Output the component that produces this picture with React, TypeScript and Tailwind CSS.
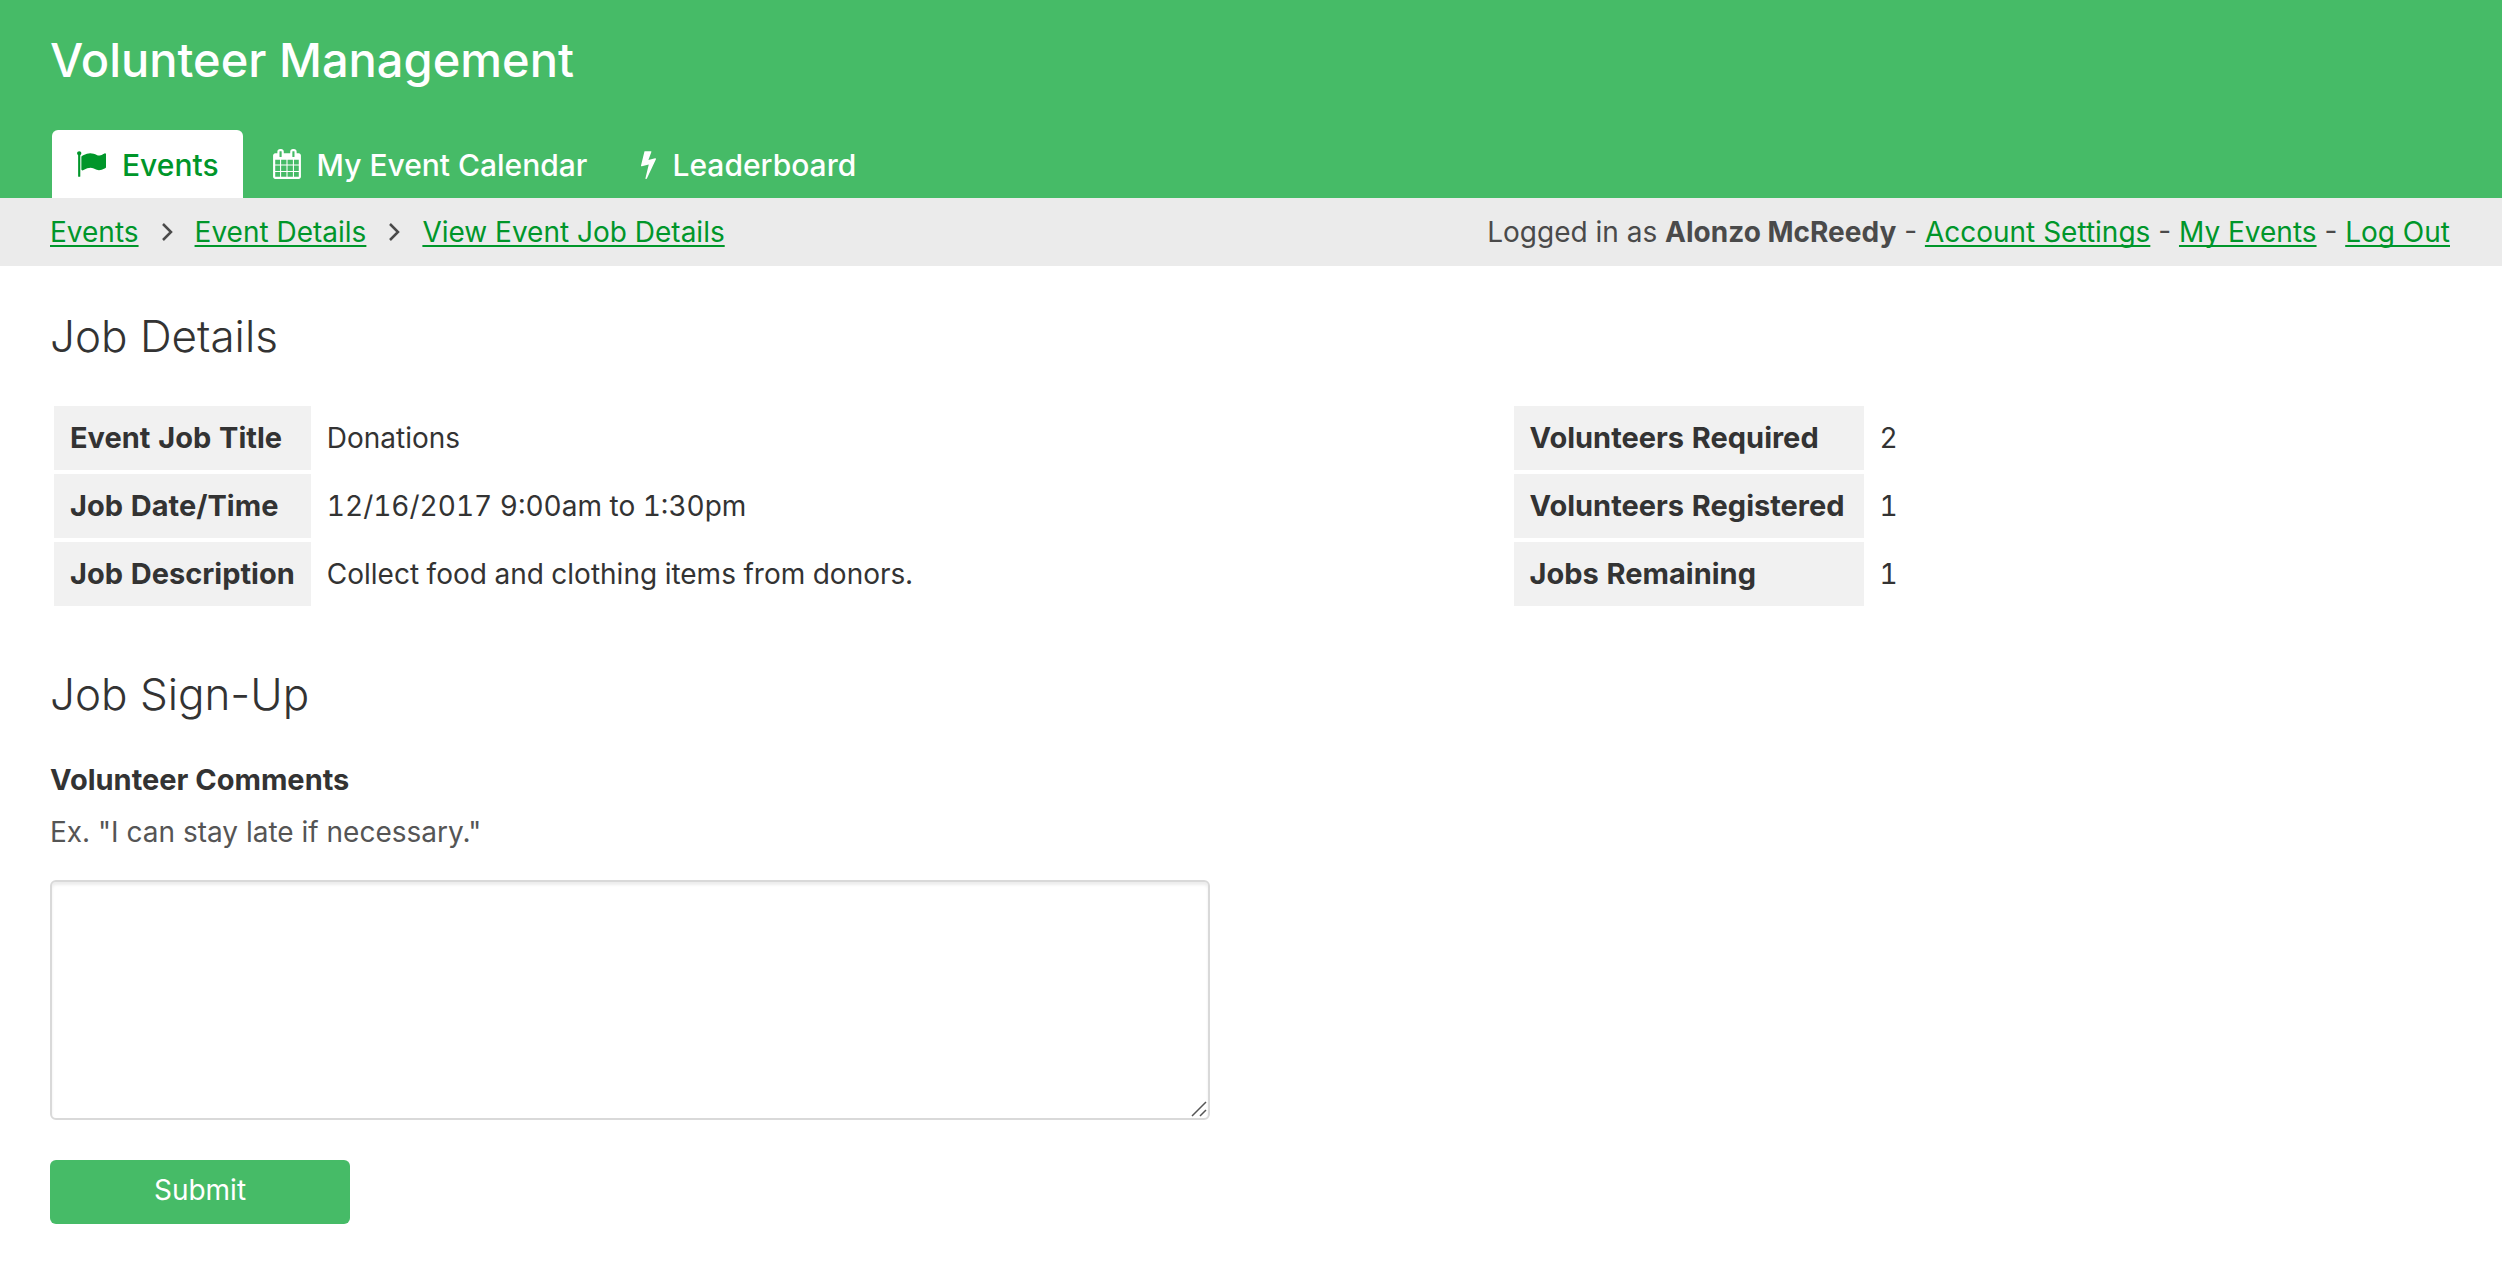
import React, { useState } from 'react';
import { clsx } from 'clsx';

interface Tab {
  id: string;
  label: string;
  path: string;
  viewBox: string;
  iconClass: string;
}

interface DetailRow {
  label: string;
  value: string;
}

const TABS: Tab[] = [
  {
    id: 'events',
    label: 'Events',
    viewBox: '0 0 1792 1792',
    iconClass: 'w-[30px] h-[30px]',
    path: 'M320 256q0 72-64 110v1266q0 13-9.5 22.5t-22.5 9.5h-64q-13 0-22.5-9.5t-9.5-22.5v-1266q-64-38-64-110 0-53 37.5-90.5t90.5-37.5 90.5 37.5 37.5 90.5zm1472 64v763q0 25-12.5 38.5t-39.5 27.5q-215 116-369 116-61 0-123.5-22t-108.5-48-115.5-48-142.5-22q-192 0-464 146-17 9-33 9-26 0-45-19t-19-45v-742q0-32 31-55 21-14 79-43 236-120 421-120 107 0 200 29t219 88q38 19 88 19 54 0 117.5-21t110-47 88-47 54.5-21q26 0 45 19t19 45z'
  },
  {
    id: 'calendar',
    label: 'My Event Calendar',
    viewBox: '64 0 1664 1792',
    iconClass: 'w-[28px] h-[30px]',
    path: 'M192 1664h288v-288h-288v288zm352 0h320v-288h-320v288zm-352-352h288v-320h-288v320zm352 0h320v-320h-320v320zm-352-384h288v-288h-288v288zm736 736h320v-288h-320v288zm-384-736h320v-288h-320v288zm768 736h288v-288h-288v288zm-384-352h320v-320h-320v320zm-352-864v-288q0-13-9.5-22.5t-22.5-9.5h-64q-13 0-22.5 9.5t-9.5 22.5v288q0 13 9.5 22.5t22.5 9.5h64q13 0 22.5-9.5t9.5-22.5zm736 864h288v-320h-288v320zm-384-384h320v-288h-320v288zm384 0h288v-288h-288v288zm32-480v-288q0-13-9.5-22.5t-22.5-9.5h-64q-13 0-22.5 9.5t-9.5 22.5v288q0 13 9.5 22.5t22.5 9.5h64q13 0 22.5-9.5t9.5-22.5zm384-64v1280q0 52-38 90t-90 38h-1408q-52 0-90-38t-38-90v-1280q0-52 38-90t90-38h128v-96q0-66 47-113t113-47h64q66 0 113 47t47 113v96h384v-96q0-66 47-113t113-47h64q66 0 113 47t47 113v96h128q52 0 90 38t38 90z'
  },
  {
    id: 'leaderboard',
    label: 'Leaderboard',
    viewBox: '448 0 896 1792',
    iconClass: 'w-[15px] h-[30px]',
    path: 'M1333 566q18 20 7 44l-540 1157q-13 25-42 25-4 0-14-2-17-5-25.5-19t-4.5-30l197-808-406 101q-4 1-12 1-18 0-31-11-18-15-13-39l201-825q4-14 16-23t28-9h328q19 0 32 12.5t13 29.5q0 8-5 18l-171 463 396-98q8-2 12-2 19 0 34 15z'
  }
];

const CRUMBS = ['Events', 'Event Details', 'View Event Job Details'];

const JOB_ROWS: DetailRow[] = [
  { label: 'Event Job Title', value: 'Donations' },
  { label: 'Job Date/Time', value: '12/16/2017 9:00am to 1:30pm' },
  { label: 'Job Description', value: 'Collect food and clothing items from donors.' }
];

const COUNT_ROWS: DetailRow[] = [
  { label: 'Volunteers Required', value: '2' },
  { label: 'Volunteers Registered', value: '1' },
  { label: 'Jobs Remaining', value: '1' }
];

function TextLink({ children }: { children: React.ReactNode }) {
  return (
    <a
      href="#"
      className="text-[#00962a] underline decoration-2 underline-offset-3 [text-decoration-skip-ink:none]"
    >
      {children}
    </a>
  );
}

function DetailTable({ rows, labelClass }: { rows: DetailRow[]; labelClass: string }) {
  return (
    <table className="border-separate border-spacing-1 text-left tabular-nums">
      <tbody>
        {rows.map(row => (
          <tr key={row.label}>
            <th
              scope="row"
              className={clsx('h-16 bg-[#f1f1f1] px-4 text-[29px] font-bold whitespace-nowrap', labelClass)}
            >
              {row.label}
            </th>
            <td className="px-3">{row.value}</td>
          </tr>
        ))}
      </tbody>
    </table>
  );
}

export default function App() {
  const [activeTab, setActiveTab] = useState('events');
  const [comments, setComments] = useState('');

  return (
    <div className="bg-white font-[Inter,sans-serif] text-[28px] leading-10 text-[#333333]">
      {/* Header with tabs */}
      <header className="bg-[#46bb67] px-[50px] pt-[30px] text-white">
        <h1 className="text-[47px] leading-[60px] font-medium">Volunteer Management</h1>
        <nav className="mt-10 flex gap-1.5 px-0.5 text-[30px] font-medium">
          {TABS.map(tab => (
            <a
              key={tab.id}
              href="#"
              onClick={() => setActiveTab(tab.id)}
              className={clsx(
                'flex h-[68px] items-center gap-4 rounded-t-md px-6',
                activeTab === tab.id && 'bg-white text-[#00962a]'
              )}
            >
              <svg viewBox={tab.viewBox} className={clsx('shrink-0 fill-current', tab.iconClass)} aria-hidden="true">
                <path d={tab.path} />
              </svg>
              <span className="pt-0.5">{tab.label}</span>
            </a>
          ))}
        </nav>
      </header>

      {/* Breadcrumb + account links */}
      <div className="flex h-[68px] items-center justify-between bg-[#ebebeb] pr-[52px] pl-[50px] text-[#4a4a4a]">
        <nav className="flex items-center">
          {CRUMBS.map((crumb, i) => (
            <React.Fragment key={crumb}>
              {i > 0 && (
                <svg viewBox="0 0 12 18" className="mx-[22px] h-[18px] w-3 fill-none stroke-current" aria-hidden="true">
                  <path d="M2 1l8 8-8 8" strokeWidth="2.5" />
                </svg>
              )}
              <TextLink>{crumb}</TextLink>
            </React.Fragment>
          ))}
        </nav>
        <p>
          Logged in as <strong className="font-bold">Alonzo McReedy</strong> - <TextLink>Account Settings</TextLink>
          {' - '}
          <TextLink>My Events</TextLink> - <TextLink>Log Out</TextLink>
        </p>
      </div>

      <main className="pt-10 pb-12">
        <section>
          <h2 className="px-[50px] text-[44px] leading-[60px] font-light">Job Details</h2>
          <div className="mt-9 flex">
            <div className="w-7/12 px-[50px]">
              <DetailTable rows={JOB_ROWS} labelClass="min-w-[256px]" />
            </div>
            <div className="w-5/12 px-[50px]">
              <DetailTable rows={COUNT_ROWS} labelClass="min-w-[350px]" />
            </div>
          </div>
        </section>

        {/* Sign-up form */}
        <section className="mt-[54px] px-[50px]">
          <h2 className="text-[44px] leading-[60px] font-light">Job Sign-Up</h2>
          <form className="mt-9" onSubmit={e => e.preventDefault()}>
            <label htmlFor="comments" className="block text-[29px] leading-10 font-bold">Volunteer Comments</label>
            <p id="comments-hint" className="mt-3 text-[#555555]">Ex. "I can stay late if necessary."</p>
            <div className="relative mt-7 w-fit max-w-full">
              <textarea
                id="comments"
                aria-describedby="comments-hint"
                value={comments}
                onChange={e => setComments(e.target.value)}
                className="block h-[240px] w-[1160px] max-w-full rounded-md border-2 border-[#d9d9d9] p-4 shadow-[inset_0_3px_3px_#ededed] outline-none [&::-webkit-resizer]:hidden"
              />
              {/* Resize grip */}
              <svg
                viewBox="0 0 16 16"
                className="pointer-events-none absolute right-[3px] bottom-[3px] h-4 w-4 fill-none stroke-[#555555]"
                aria-hidden="true"
              >
                <path d="M1 15L15 1M9 15l6-6" strokeWidth="1.5" />
              </svg>
            </div>
            <button type="submit" className="mt-10 h-16 w-[300px] rounded-md bg-[#46bb67] pb-1 text-white">
              Submit
            </button>
          </form>
        </section>
      </main>
    </div>
  );
}
